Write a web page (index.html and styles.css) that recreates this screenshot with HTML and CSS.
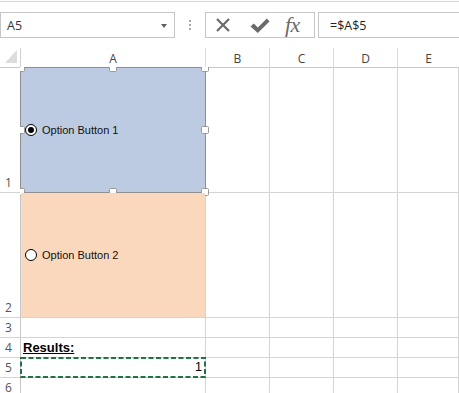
FILE: index.html
```html
<!DOCTYPE html>
<html>
<head>
<meta charset="utf-8">
<link rel="stylesheet" href="styles.css">
</head>
<body>
<div class="app">
  <div class="topline"></div>
  <div class="fbar">
    <div class="namebox">
      <span class="nb-text">A5</span>
      <span class="nb-arrow"></span>
    </div>
    <div class="grip"><span></span><span></span><span></span></div>
    <div class="btns">
      <svg class="ic-x" width="16" height="16" viewBox="0 0 16 16"><path d="M2 2 L14 14 M14 2 L2 14" stroke="#6a6a6a" stroke-width="2.2" fill="none"/></svg>
      <svg class="ic-ok" width="20" height="16" viewBox="0 0 20 16"><path d="M0.5 8.5 L3.8 5.6 L7.8 9.4 L16.8 0.6 L19.5 3.4 L7.8 15 Z" fill="#6a6a6a"/></svg>
      <span class="ic-fx">fx</span>
    </div>
    <div class="formula">=$A$5</div>
  </div>

  <div class="hdr">
    <div class="corner"><span class="tri"></span></div>
    <div class="ch">A</div>
    <div class="ch">B</div>
    <div class="ch">C</div>
    <div class="ch">D</div>
    <div class="ch last">E</div>
  </div>

  <div class="body">
    <div class="grid">
      <div class="rh">1</div><div class="c tall"></div><div class="c"></div><div class="c"></div><div class="c"></div><div class="c"></div>
      <div class="rh">2</div><div class="c tall"></div><div class="c"></div><div class="c"></div><div class="c"></div><div class="c"></div>
      <div class="rh">3</div><div class="c"></div><div class="c"></div><div class="c"></div><div class="c"></div><div class="c"></div>
      <div class="rh">4</div><div class="c results">Results:</div><div class="c"></div><div class="c"></div><div class="c"></div><div class="c"></div>
      <div class="rh">5</div><div class="c sel">1<svg class="ants" width="186" height="21" viewBox="0 0 186 21"><rect x="1" y="1" width="184" height="19" fill="none" stroke="#217346" stroke-width="2" stroke-dasharray="5 2.5"/></svg></div><div class="c"></div><div class="c"></div><div class="c"></div><div class="c"></div>
      <div class="rh">6</div><div class="c"></div><div class="c"></div><div class="c"></div><div class="c"></div><div class="c"></div>
    </div>
    <div class="layer">
      <div class="shape blue">
        <span class="radio on"></span><span class="lbl">Option Button 1</span>
        <span class="h h-tl"></span><span class="h h-tm"></span><span class="h h-tr"></span>
        <span class="h h-ml"></span><span class="h h-mr"></span>
        <span class="h h-bl"></span><span class="h h-bm"></span><span class="h h-br"></span>
      </div>
      <div class="shape peach">
        <span class="radio"></span><span class="lbl">Option Button 2</span>
      </div>
    </div>
  </div>
</div>
</body>
</html>
```

FILE: styles.css
```css
* { box-sizing: border-box; }
html, body { margin: 0; padding: 0; background: #fff; }
body { width: 459px; height: 393px; overflow: hidden; font-family: "Liberation Sans", Arial, sans-serif; color: #222; }

.app { padding-top: 1px; }
.topline { height: 1px; background: #d6d6d6; }

.fbar { display: flex; align-items: center; height: 46px; }
.namebox { width: 175px; height: 26px; border: 1px solid #c6c6c6; display: flex; align-items: center; justify-content: space-between; padding: 0 7px 0 6px; }
.nb-text { font-family: "Open Sans", sans-serif; font-size: 12.5px; color: #333; }
.nb-arrow { width: 0; height: 0; border-left: 3.5px solid transparent; border-right: 3.5px solid transparent; border-top: 4px solid #606060; margin-top: 1px; }
.grip { width: 30px; display: flex; flex-direction: column; align-items: center; gap: 2px; }
.grip span { width: 2px; height: 2px; background: #a8a8a8; }
.btns { width: 110px; height: 26px; border: 1px solid #c6c6c6; display: flex; align-items: center; padding-left: 9px; }
.ic-x { margin-right: 19px; }
.ic-ok { margin-right: 15px; margin-top: 2px; }
.ic-fx { font-family: "Liberation Serif", serif; font-style: italic; font-size: 22px; line-height: 22px; color: #6a6a6a; letter-spacing: -0.5px; margin-top: -1px; }
.formula { flex: 1; height: 26px; margin-left: 3px; margin-right: -4px; border: 1px solid #c6c6c6; display: flex; align-items: center; padding-left: 11px; font-family: "Open Sans", sans-serif; font-size: 12.5px; color: #222; }

.hdr { display: grid; grid-template-columns: 21px 185px 64px 64px 64px 1fr; height: 20px; border-bottom: 1px solid #c8c8c8; }
.corner { border-right: 1px solid #d0d0d0; position: relative; }
.tri { position: absolute; left: 5px; top: 2px; width: 0; height: 0; border-left: 12px solid transparent; border-bottom: 13px solid #dcdcdc; }
.ch { border-right: 1px solid #dadada; text-align: center; font-family: "Open Sans", sans-serif; font-size: 12px; color: #444; line-height: 20px; padding-top: 1px; }
.ch.last { border-right: 0; }

.body { position: relative; }
.grid { display: grid; grid-template-columns: 21px 185px 64px 64px 64px 1fr; grid-template-rows: 125px 125px 20px 20px 20px 20px; }
.rh { border-right: 1px solid #c8c8c8; border-bottom: 1px solid #d4d4d4; font-family: "Open Sans", sans-serif; font-size: 12px; color: #555; display: flex; align-items: flex-end; padding-left: 5px; line-height: 16px; padding-bottom: 1px; }
.c { border-right: 1px solid #d4d4d4; border-bottom: 1px solid #d4d4d4; }
.results { font-weight: bold; text-decoration: underline; font-size: 13px; padding-left: 2px; line-height: 19px; color: #000; }
.sel { position: relative; text-align: right; font-size: 12.5px; line-height: 19px; padding-right: 3px; color: #000; }
.ants { position: absolute; left: -1px; top: -1px; }

.layer { position: absolute; left: 20px; top: -1px; right: 0; bottom: 0; overflow: hidden; pointer-events: none; }
.shape { position: absolute; display: flex; align-items: center; font-size: 11px; color: #111; }
.blue { left: 0; top: 0; width: 186px; height: 126px; background: #bccbe1; border: 1px solid #8f8f8f; padding-left: 4px; }
.peach { left: 1px; top: 126px; width: 184px; height: 124px; background: #fad8bd; padding-left: 4px; }
.radio { width: 12px; height: 12px; border-radius: 50%; border: 1px solid #000; background: #fff; position: relative; margin-right: 5px; }
.radio.on::after { content: ""; position: absolute; left: 2px; top: 2px; width: 6px; height: 6px; border-radius: 50%; background: #000; }
.lbl { line-height: 14px; }
.h { position: absolute; width: 8px; height: 8px; background: #fff; border: 1px solid #9a9a9a; border-radius: 1.5px; }
.h-tl { left: -4px; top: -4px; }
.h-tm { left: 88px; top: -4px; }
.h-tr { right: -4px; top: -4px; }
.h-ml { left: -4px; top: 58px; }
.h-mr { right: -4px; top: 58px; }
.h-bl { left: -4px; bottom: -4px; }
.h-bm { left: 88px; bottom: -4px; }
.h-br { right: -4px; bottom: -4px; }
```
